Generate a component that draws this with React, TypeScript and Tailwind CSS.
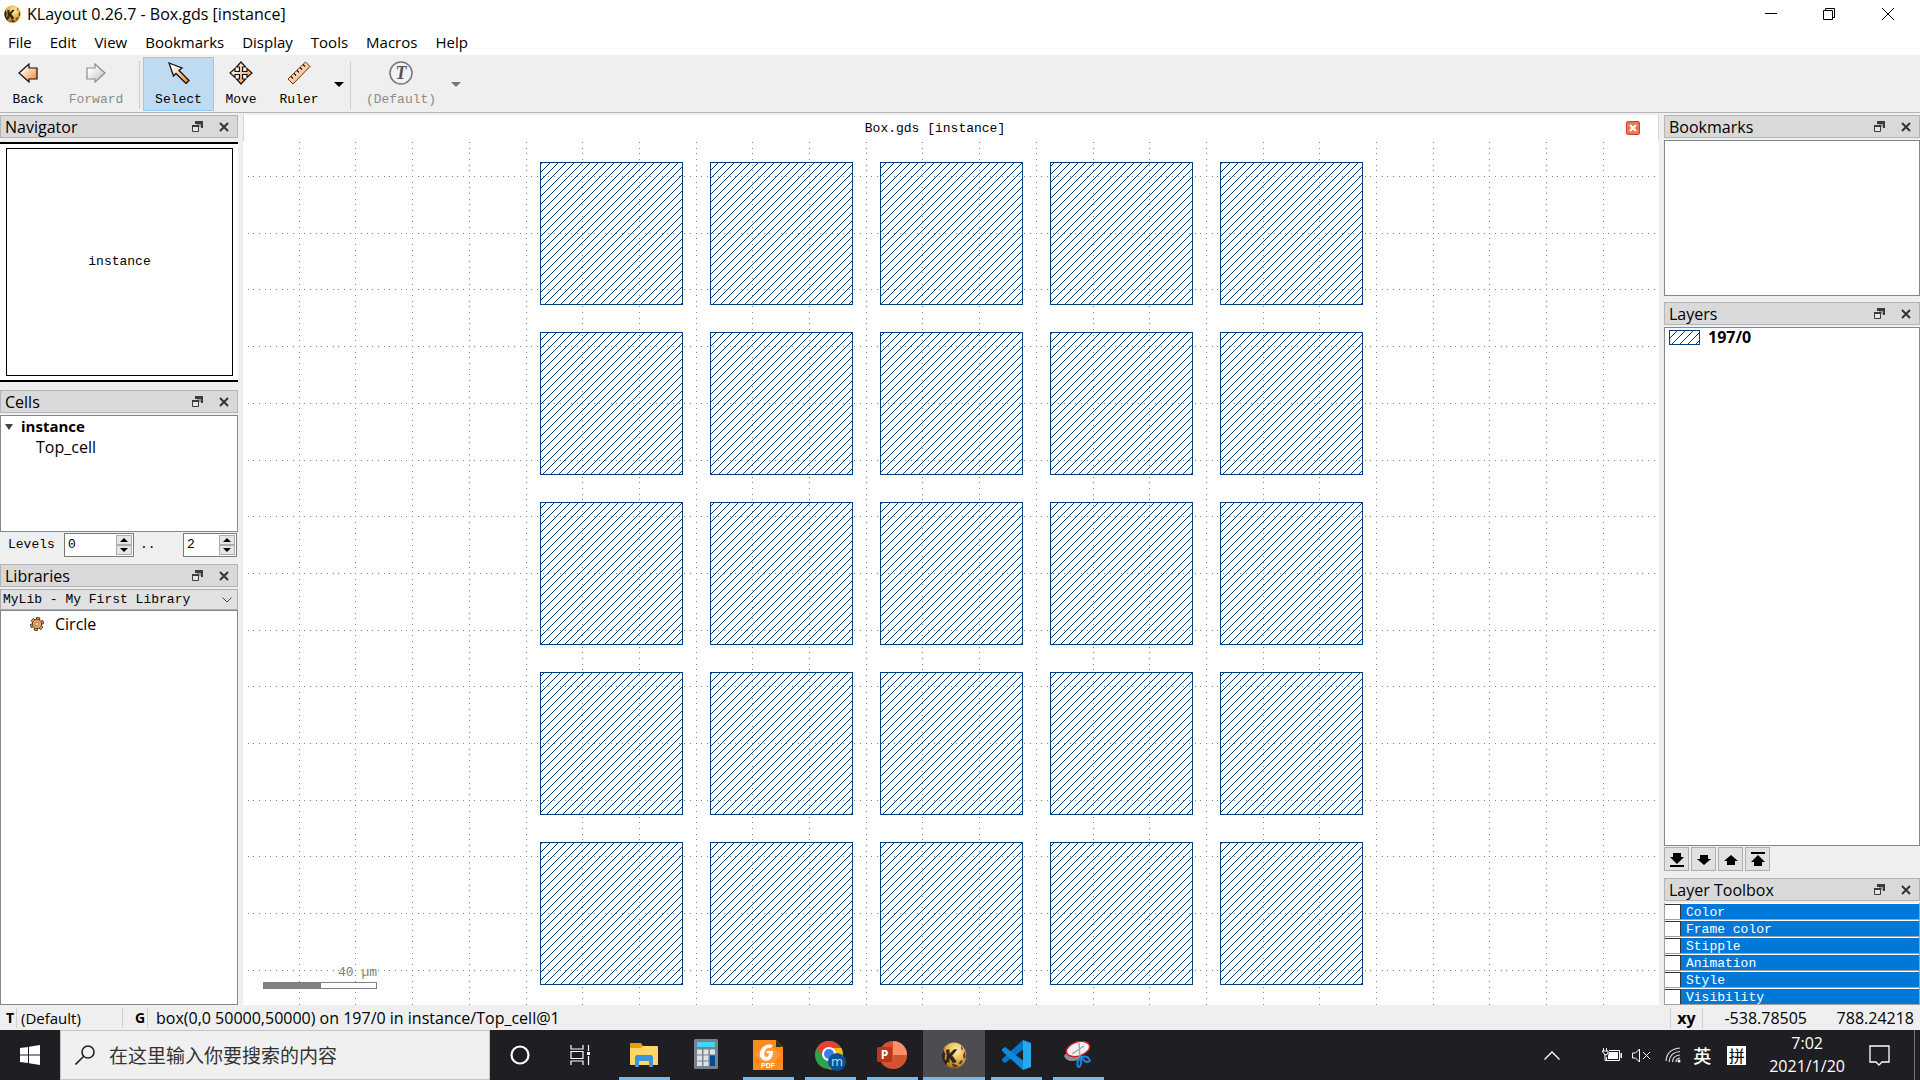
import { useId, type ReactNode } from "react";

const MENUS = ["File", "Edit", "View", "Bookmarks", "Display", "Tools", "Macros", "Help"];
const TOOLBOX = ["Color", "Frame color", "Stipple", "Animation", "Style", "Visibility"];

// Layout canvas geometry, in canvas pixels
const GRID_X = 283;
const GRID_Y = 35;
const GRID_STEP = 56.7;
const DOT_STEP = GRID_STEP / 10;
const CANVAS_W = 1412;
const CANVAS_H = 864;
const BOX_X = 297;
const BOX_Y = 21;
const BOX_SIZE = 142;
const BOX_PITCH = 170;

function buildGridPath() {
  const dots: string[] = [];
  const dot = (x: number, y: number) => dots.push(`M${Math.floor(x)} ${Math.round(y)}h1v1h-1z`);
  for (let i = -4; i <= 19; i++) {
    for (let j = -6; GRID_Y + j * DOT_STEP < CANVAS_H; j++) {
      dot(GRID_X + i * GRID_STEP, GRID_Y + j * DOT_STEP);
    }
  }
  for (let j = 0; j <= 14; j++) {
    for (let i = -49; GRID_X + i * DOT_STEP < CANVAS_W + 4; i++) {
      dot(GRID_X + i * DOT_STEP, GRID_Y + j * GRID_STEP);
    }
  }
  return dots.join("");
}

const GRID_PATH = buildGridPath();

function KLayoutLogo({ className }: { className: string }) {
  const id = useId();
  return (
    <svg viewBox="0 0 28 30" className={className} aria-hidden="true">
      <defs>
        <radialGradient id={id} cx="0.6" cy="0.3" r="0.8">
          <stop offset="0" stopColor="#fff3b0" />
          <stop offset="0.35" stopColor="#f0c565" />
          <stop offset="0.75" stopColor="#c48a35" />
          <stop offset="1" stopColor="#6b4416" />
        </radialGradient>
      </defs>
      <ellipse cx="14" cy="15" rx="13.5" ry="14.5" fill={`url(#${id})`} />
      <path d="M4 6Q0 11 0.500 17q1 6 5 9l1-4-3-3 1-6-2-3z" fill="#33251a" />
      <path d="M5 9l4-1v5l5-5h4l-6 7 5 7-4 2-4-6v5l-4-1 1-7z" fill="#33251a" />
      <path d="M22 4l2 3-1 3-1-3zM26 10l1 7-2 2-1-4zM22 20l2 1-3 4-2-1zM11 24l5 1 3 2-5 2z" fill="#5a3d1c" />
    </svg>
  );
}

function FloatIcon() {
  return (
    <svg viewBox="0 0 11 11" className="size-[11px]" aria-hidden="true">
      <path d="M3 0h8v7H9V3H3z" fill="#3c3c3c" />
      <path d="M5 3h4v3H7V4H5z" fill="#9a9a9a" />
      <path d="M0.500 4.500h6v6h-6z" fill="#e6e6e6" stroke="#3c3c3c" />
      <path d="M0 4h7v2H0z" fill="#3c3c3c" />
    </svg>
  );
}

function DockTitle({ title }: { title: string }) {
  return (
    <div className="flex h-[23px] shrink-0 items-center border border-[#b4b4b4] bg-[#d9d9d9] pr-2 pl-1">
      <h2 className="flex-1 text-base leading-5">{title}</h2>
      <button type="button" aria-label={`Float ${title}`} className="mr-4">
        <FloatIcon />
      </button>
      <button type="button" aria-label={`Close ${title}`}>
        <svg viewBox="0 0 10 10" className="size-[10px]" aria-hidden="true">
          <path d="M1 1l8 8M9 1L1 9" stroke="#333" strokeWidth="2" />
        </svg>
      </button>
    </div>
  );
}

function Spin({ label, value, className }: { label: string; value: string; className: string }) {
  return (
    <div className={`flex h-6 border border-[#7a7a7a] bg-white p-px ${className}`}>
      <input
        aria-label={label}
        defaultValue={value}
        className="w-0 flex-1 pl-0.5 font-['Liberation_Mono',monospace] text-[13px] outline-none"
      />
      <div className="flex w-4 flex-col">
        <button type="button" aria-label={`${label} up`} className="flex flex-1 items-center justify-center border border-[#adadad] bg-[#e6e6e6]">
          <svg viewBox="0 0 8 4" className="h-1 w-2"><path d="M4 0l4 4H0z" /></svg>
        </button>
        <button type="button" aria-label={`${label} down`} className="flex flex-1 items-center justify-center border border-[#adadad] bg-[#e6e6e6]">
          <svg viewBox="0 0 8 4" className="h-1 w-2"><path d="M0 0h8L4 4z" /></svg>
        </button>
      </div>
    </div>
  );
}

function ToolButton({ label, className, children }: { label: string; className: string; children: ReactNode }) {
  return (
    <button
      type="button"
      className={`flex h-[54px] flex-col items-center border pt-[3px] font-['Liberation_Mono',monospace] text-[13px] leading-4 ${className}`}
    >
      <span className="flex h-6 items-center">{children}</span>
      <span className="mt-[7px]">{label}</span>
    </button>
  );
}

function Toolbar() {
  return (
    <div className="flex h-[57px] shrink-0 items-start border-b border-[#b4b4b4] bg-[#efefef] pt-px">
      <svg className="size-0" aria-hidden="true">
        <defs>
          <linearGradient id="orange" x1="0" y1="0" x2="1" y2="1">
            <stop offset="0.2" stopColor="#fff" />
            <stop offset="1" stopColor="#ff7f1a" />
          </linearGradient>
          <linearGradient id="grey" x1="0" y1="0" x2="1" y2="1">
            <stop offset="0.2" stopColor="#fff" />
            <stop offset="1" stopColor="#bbb" />
          </linearGradient>
        </defs>
      </svg>
      <ToolButton label="Back" className="w-14 border-transparent">
        <svg viewBox="0 0 20 20" className="size-5">
          <path d="M1 10L11 1v4h8v11h-8v3z" fill="url(#orange)" stroke="#111" strokeWidth="1.200" />
        </svg>
      </ToolButton>
      <ToolButton label="Forward" className="w-20 border-transparent text-[#8c8c8c]">
        <svg viewBox="0 0 20 20" className="size-5">
          <path d="M19 10L9 1v4H1v11h8v3z" fill="url(#grey)" stroke="#8c8c8c" strokeWidth="1.200" />
        </svg>
      </ToolButton>
      <div className="mx-[3px] mt-1 h-12 w-px bg-[#cfcfcf]" />
      <ToolButton label="Select" className="w-[71px] border-[#90c8f6] bg-[#bfdbf2]">
        <svg viewBox="0 0 22 22" className="size-[22px]">
          <path d="M1 1l13 5-3 2.500 10 10-3 3-10-10L5.500 14z" fill="url(#orange)" stroke="#111" strokeWidth="1.300" />
        </svg>
      </ToolButton>
      <ToolButton label="Move" className="w-[54px] border-transparent">
        <svg viewBox="0 0 24 24" className="size-6">
          <path
            d="M12 1l4.500 5h-3v4.500H18v-3l5 4.500-5 4.500v-3h-4.500V18h3L12 23l-4.500-5h3v-4.500H6v3L1 12l5-4.500v3h4.500V6h-3z"
            fill="url(#orange)"
            stroke="#111"
            strokeWidth="1.200"
          />
        </svg>
      </ToolButton>
      <ToolButton label="Ruler" className="w-[62px] border-transparent">
        <svg viewBox="0 0 24 24" className="size-6">
          <path d="M1 18L18.500 1l4.500 4.500L6 23z" fill="url(#orange)" stroke="#6b3a10" />
          <path d="M4 15.500l2 2M7 12.500l2 2M10 9.500l2 2M13 6.500l2 2M16 3.500l2 2" stroke="#111" strokeWidth="1.200" />
        </svg>
      </ToolButton>
      <button type="button" aria-label="Ruler types" className="mt-[25px] ml-1">
        <svg viewBox="0 0 10 5" className="h-[5px] w-[10px]"><path d="M0 0h10L5 5z" /></svg>
      </button>
      <div className="mt-1 ml-1.5 h-12 w-px bg-[#cfcfcf]" />
      <ToolButton label="(Default)" className="ml-2 w-[84px] border-transparent text-[#8c8c8c]">
        <svg viewBox="0 0 24 24" className="size-6">
          <circle cx="12" cy="12" r="11" fill="#f2f2f2" stroke="#777" strokeWidth="1.500" />
          <text x="12" y="18" textAnchor="middle" className="fill-[#555] font-['Liberation_Serif',serif] text-[18px] font-bold italic">
            T
          </text>
        </svg>
      </ToolButton>
      <button type="button" aria-label="Default options" className="mt-[25px] ml-2">
        <svg viewBox="0 0 10 5" className="h-[5px] w-[10px]"><path d="M0 0h10L5 5z" fill="#777" /></svg>
      </button>
    </div>
  );
}

function LeftDocks() {
  return (
    <aside className="flex w-[238px] shrink-0 flex-col">
      <DockTitle title="Navigator" />
      <div className="mt-1 border-y-2 border-black bg-white py-1 pr-[5px] pl-1.5">
        <div className="flex h-[228px] items-center justify-center border border-black font-['Liberation_Mono',monospace] text-[13px]">
          instance
        </div>
      </div>
      <div className="mt-2 flex flex-col">
        <DockTitle title="Cells" />
      </div>
      <ul className="mt-0.5 h-[117px] border border-[#828790] bg-white text-base leading-[21px]">
        <li className="flex items-center gap-2 pl-1 text-[15px] leading-[21px] font-bold">
          <svg viewBox="0 0 8 6" className="h-1.5 w-2"><path d="M0 0h8L4 6z" fill="#444" /></svg>
          instance
        </li>
        <li className="pl-[35px]">Top_cell</li>
      </ul>
      <div className="mt-px flex h-6 items-center pr-px pl-2 font-['Liberation_Mono',monospace] text-[13px]">
        <span className="w-14">Levels</span>
        <Spin label="First level" value="0" className="w-[70px]" />
        <span className="flex-1 pl-1.5">..</span>
        <Spin label="Last level" value="2" className="w-[54px]" />
      </div>
      <div className="mt-[7px] flex flex-col">
        <DockTitle title="Libraries" />
      </div>
      <div className="relative mt-0.5">
        <select
          aria-label="Library"
          className="block h-[21px] w-full appearance-none border border-[#adadad] bg-[#e1e1e1] pl-0.5 font-['Liberation_Mono',monospace] text-[13px] leading-4"
        >
          <option>MyLib - My First Library</option>
        </select>
        <svg viewBox="0 0 10 6" className="pointer-events-none absolute top-2 right-1.5 h-1.5 w-2.5">
          <path d="M0.500 0.500L5 5l4.500-4.500" fill="none" stroke="#444" />
        </svg>
      </div>
      <ul className="flex-1 border border-[#828790] bg-white pt-[3px]">
        <li className="flex items-center gap-[11px] pl-[29px] text-base leading-5">
          <svg viewBox="-7 -7 14 14" className="size-3.5">
            <g fill="#f0a058" stroke="#4a3020" strokeWidth="0.900" transform="rotate(12)">
              {[0, 60, 120].map((angle) => (
                <rect key={angle} x="-1.600" y="-6.500" width="3.200" height="13" transform={`rotate(${angle})`} />
              ))}
              <circle r="4.500" />
            </g>
            <circle r="4" fill="#f0a058" />
            <circle r="1.800" fill="#ddd" stroke="#8a7a6a" strokeWidth="0.800" />
          </svg>
          Circle
        </li>
      </ul>
    </aside>
  );
}

function LayoutView() {
  const cells = [0, 1, 2, 3, 4];
  return (
    <main className="mx-[5px] flex min-w-0 flex-1 flex-col bg-white">
      <div className="flex h-[26px] shrink-0 items-center border-x border-[#d4d4d4] pr-[18px]">
        <h1 className="flex-1 pt-0.5 text-center font-['Liberation_Mono',monospace] text-[13px]">Box.gds [instance]</h1>
        <button type="button" aria-label="Close view">
          <svg viewBox="0 0 14 14" className="size-3.5">
            <rect x="0.500" y="0.500" width="13" height="13" rx="1.500" fill="#e57a50" stroke="#d83c2c" />
            <path d="M4 4l6 6M10 4l-6 6" stroke="#fff" strokeWidth="2.200" />
          </svg>
        </button>
      </div>
      <svg className="min-h-0 w-full flex-1" shapeRendering="crispEdges" role="img" aria-label="Cell layout">
        <defs>
          <pattern id="hatch" width="8" height="8" patternUnits="userSpaceOnUse">
            <path
              d="M0 0h1v1H0zM7 1h1v1H7zM6 2h1v1H6zM5 3h1v1H5zM4 4h1v1H4zM3 5h1v1H3zM2 6h1v1H2zM1 7h1v1H1z"
              fill="#004080"
            />
          </pattern>
        </defs>
        <path d={GRID_PATH} fill="#808080" />
        {cells.map((row) =>
          cells.map((col) => (
            <rect
              key={`${row}-${col}`}
              x={BOX_X + col * BOX_PITCH + 0.5}
              y={BOX_Y + row * BOX_PITCH + 0.5}
              width={BOX_SIZE}
              height={BOX_SIZE}
              fill="url(#hatch)"
              stroke="#004080"
            />
          ))
        )}
        {/* Scale bar */}
        <text x="134" y="835" textAnchor="end" className="fill-[#808080] font-['Liberation_Mono',monospace] text-[13px]">
          40 µm
        </text>
        <rect x="20.500" y="841.500" width="113" height="6" fill="#fff" stroke="#808080" />
        <rect x="20" y="841" width="58" height="7" fill="#808080" />
      </svg>
    </main>
  );
}

const LAYER_MOVES = [
  { label: "Move to bottom", d: "M4 2h8v4h3l-7 7-7-7h3zM1 14h14v2H1z" },
  { label: "Move down", d: "M4 4h8v4h3l-7 6-7-6h3z" },
  { label: "Move up", d: "M4 14h8v-4h3L8 4l-7 6h3z" },
  { label: "Move to top", d: "M4 15h8v-4h3L8 4l-7 7h3zM1 1h14v2H1z" },
];

function RightDocks() {
  return (
    <aside className="flex w-64 shrink-0 flex-col">
      <DockTitle title="Bookmarks" />
      <div className="mt-0.5 h-[156px] shrink-0 border border-[#828790] bg-white" />
      <div className="mt-1.5 flex flex-col">
        <DockTitle title="Layers" />
      </div>
      <div className="mt-0.5 flex-1 border border-[#828790] bg-white">
        <div className="flex items-center gap-2 pl-1 text-base leading-[18px] font-bold">
          <svg viewBox="0 0 31 15" className="h-[15px] w-[31px]" shapeRendering="crispEdges">
            <rect x="0.500" y="0.500" width="30" height="14" fill="url(#hatch)" stroke="#004080" />
          </svg>
          197/0
        </div>
      </div>
      <div className="mt-px flex gap-0.5">
        {LAYER_MOVES.map((move) => (
          <button
            key={move.label}
            type="button"
            aria-label={move.label}
            className="flex h-6 w-[25px] items-center justify-center border border-[#adadad] bg-[#e1e1e1]"
          >
            <svg viewBox="0 0 16 17" className="h-[17px] w-4"><path d={move.d} /></svg>
          </button>
        ))}
      </div>
      <div className="mt-[7px] flex flex-col">
        <DockTitle title="Layer Toolbox" />
      </div>
      <div className="mt-0.5 border-x border-[#a0a0a0]">
        {TOOLBOX.map((name) => (
          <label
            key={name}
            className="flex h-[17px] items-stretch border-t border-b border-t-white border-b-[#a0a0a0] bg-[#0078d7] font-['Liberation_Mono',monospace] text-[13px] leading-[17px] text-white"
          >
            <input type="checkbox" className="mr-[5px] w-4 appearance-none border-t border-r border-[#333] bg-white" />
            {name}
          </label>
        ))}
      </div>
    </aside>
  );
}

function StatusBar() {
  return (
    <footer className="flex h-[25px] shrink-0 items-center bg-[#efefef] text-base leading-5">
      <div className="w-[17px] border-r border-[#d0d0d0] pl-1.5 text-[14px] font-bold">T</div>
      <div className="w-[106px] border-r border-[#d0d0d0] pl-1 text-[15px]">(Default)</div>
      <div className="w-[25px] border-r border-[#d0d0d0] pl-3 text-[14px] font-bold">G</div>
      <div className="flex-1 pl-2">box(0,0 50000,50000) on 197/0 in instance/Top_cell@1</div>
      <div className="w-[33px] border-x border-[#d0d0d0] text-center font-bold">xy</div>
      <div className="w-[104px] text-right">-538.78505</div>
      <div className="w-[113px] pr-1.5 text-right">788.24218</div>
    </footer>
  );
}

interface TaskProps {
  label: string;
  running?: boolean;
  active?: boolean;
  children: ReactNode;
}

function Task({ label, running, active, children }: TaskProps) {
  return (
    <button
      type="button"
      aria-label={label}
      className={`flex h-full w-[62px] flex-col items-center ${active ? "bg-[#4d4d51]" : ""}`}
    >
      <span className="flex flex-1 items-center">{children}</span>
      <span className={`h-[3px] ${active ? "w-full" : "w-[51px]"} ${running ? "-mt-[3px] bg-[#76b9ed]" : ""}`} />
    </button>
  );
}

function Taskbar() {
  return (
    <nav className="flex h-[50px] shrink-0 items-center bg-[#1f1e23] font-['Noto_Sans_CJK_SC',sans-serif] text-white">
      <button type="button" aria-label="Start" className="flex w-[60px] justify-center">
        <svg viewBox="0 0 20 20" className="size-5" fill="#fff">
          <path d="M0 3l8-1v7.500H0zM9 1.800L20 0v9.500H9zM0 10.500h8V18l-8-1zM9 10.500h11V20L9 18.200z" />
        </svg>
      </button>
      <label className="flex h-full w-[430px] items-center border border-[#c4c4c4] bg-[#f0f0f0] pl-3.5">
        <svg viewBox="0 0 20 20" className="size-5" fill="none" stroke="#222" strokeWidth="1.600">
          <circle cx="13" cy="7" r="6" />
          <path d="M8.500 11.500L0.500 19.500" />
        </svg>
        <input
          aria-label="Search"
          placeholder="在这里输入你要搜索的内容"
          className="ml-3.5 flex-1 text-[19px] leading-7 outline-none placeholder:text-[#333]"
        />
      </label>
      <button type="button" aria-label="Cortana" className="flex w-[60px] justify-center">
        <svg viewBox="0 0 20 20" className="size-5"><circle cx="10" cy="10" r="8.500" fill="none" stroke="#fff" strokeWidth="2.200" /></svg>
      </button>
      <button type="button" aria-label="Task view" className="flex w-[60px] justify-center">
        <svg viewBox="0 0 20 20" className="size-5" fill="none" stroke="#fff" strokeWidth="1.200">
          <path d="M1 0v4h12V0M1 20v-4h12v4M1 6.500h12v7H1zM18.500 0v6M18.500 11v9" />
          <path d="M17 7h3v3h-3z" fill="#fff" stroke="none" />
        </svg>
      </button>
      <div className="ml-[3px] flex h-full">
        <Task label="File Explorer" running>
          <svg viewBox="0 0 28 24" className="h-6 w-7">
            <path d="M0 1q0-1 1-1h10l2 3v4H0z" fill="#e3a008" />
            <path d="M0 5h11l2-2h14q1 0 1 1v18H0z" fill="#ffd667" />
            <path d="M5 14q0-2 2-2h14q2 0 2 2v10h-4v-6H9v6H5z" fill="#3c94dc" />
          </svg>
        </Task>
        <Task label="Calculator">
          <svg viewBox="0 0 24 30" className="h-[30px] w-6">
            <rect width="24" height="30" rx="1.500" fill="#79838f" />
            <path d="M3 3h18v5H3z" fill="#45d3f7" />
            <path d="M3 10.500h5v5H3zM9.500 10.500h5v5h-5zM16 10.500h5v5h-5zM3 16.500h5v5H3zM9.500 16.500h5v5h-5zM3 22.500h5v4.500H3zM9.500 22.500h5v4.500h-5z" fill="#dfe3e8" />
            <path d="M16 16.500h5V27h-5z" fill="#0a4a94" />
          </svg>
        </Task>
        <Task label="PDF reader" running>
          <svg viewBox="0 0 30 30" className="size-[30px]">
            <path d="M0 0h23l7 7v23H0z" fill="#fa8b1f" />
            <path d="M23 0v7h7z" fill="#3a2a20" />
            <path d="M2 15L15 3l13 12-13 12z" fill="#fb9a3a" />
            <path d="M20 5q-7-2-11 3-4 6-1 10 3 4 8 2 4-2 4-9h-6l-1 2h3q0 4-3 4-3-1-1-6 2-4 6-3z" fill="#fff" />
            <text x="15" y="28" textAnchor="middle" className="fill-white font-['Liberation_Sans',sans-serif] text-[7px] font-bold">PDF</text>
          </svg>
        </Task>
        <Task label="Chrome" running>
          <svg viewBox="0 0 31 31" className="size-[31px]">
            <circle cx="14" cy="15" r="14" fill="#2fa24c" />
            <path d="M2 8Q6 1 14 1t12 7H14q-6 0-7 7z" fill="#e5433a" />
            <path d="M14 8h12.500Q30 17 25 24t-11 5l6-11z" fill="#fbc116" />
            <circle cx="14" cy="14" r="7" fill="#fff" />
            <circle cx="14" cy="14" r="5" fill="#3b7ded" />
            <circle cx="22" cy="22" r="9" fill="#07539a" />
            <text x="22" y="26" textAnchor="middle" className="fill-[#b9dcf8] font-['Open_Sans',sans-serif] text-[13px]">m</text>
          </svg>
        </Task>
        <Task label="PowerPoint" running>
          <svg viewBox="0 0 30 28" className="h-7 w-[30px]">
            <circle cx="16" cy="14" r="14" fill="#d35230" />
            <path d="M16 0a14 14 0 0 1 14 14H16z" fill="#ff8f6b" />
            <path d="M16 28a14 14 0 0 0 14-14H16z" fill="#d35230" />
            <rect y="6" width="15" height="15" rx="1.500" fill="#b9381a" />
            <text x="7.500" y="18" textAnchor="middle" className="fill-white font-['Open_Sans',sans-serif] text-[12px] font-bold">P</text>
          </svg>
        </Task>
        <Task label="KLayout" running active>
          <KLayoutLogo className="h-[27px] w-7" />
        </Task>
        <Task label="Visual Studio Code" running>
          <svg viewBox="0 0 30 30" className="size-[30px]">
            <path d="M22 0L1 19v2l3 2 18-13.500z" fill="#0078c8" />
            <path d="M22 30L1 11V9l3-2 18 13.500z" fill="#1189d6" />
            <path d="M22 0l8 3v24l-8 3z" fill="#27a8f2" />
          </svg>
        </Task>
        <Task label="Snipping Tool" running>
          <svg viewBox="0 0 28 28" className="size-7">
            <path d="M0 15q3-5 11-4l7 4q-3 5-10 5-6 0-8-5z" fill="#8b8f96" />
            <ellipse cx="14" cy="8" rx="12" ry="7" fill="#f2f2f2" stroke="#d0202a" strokeWidth="1.500" transform="rotate(-18 14 8)" />
            <path d="M15 2l1 16M8 13l12-8" stroke="#a8a8a8" strokeWidth="1.500" />
            <path d="M16 17q-4 4-2 9 4 0 3-9zM17 16q7-2 9 4-4 3-9-4z" fill="none" stroke="#1c86d8" strokeWidth="2" />
          </svg>
        </Task>
      </div>
      <div className="ml-auto flex h-full items-center">
        <button type="button" aria-label="Show hidden icons" className="mr-[42px]">
          <svg viewBox="0 0 16 9" className="h-[9px] w-4"><path d="M0.500 8.500L8 1l7.500 7.500" fill="none" stroke="#fff" strokeWidth="1.300" /></svg>
        </button>
        <svg viewBox="0 0 20 14" className="mr-2.5 h-3.5 w-5">
          <path d="M1.500 0v3M4.500 0v3M0 3h6v2q0 2-3 2zM3 6v6.500h3" fill="none" stroke="#fff" />
          <path d="M7 2.500h10.500v10H4.500V9" fill="none" stroke="#fff" />
          <path d="M7 4h9v7H6V8zM18.500 5H20v5h-1.500z" fill="#fff" />
        </svg>
        <svg viewBox="0 0 19 15" className="mr-3.5 h-[15px] w-[19px]" fill="none" stroke="#fff">
          <path d="M0.500 5v5h3l4 4V1l-4 4zM11 4l7 7M18 4l-7 7" />
        </svg>
        <svg viewBox="0 0 16 16" className="mr-3 size-4" fill="none" stroke="#ddd" strokeWidth="1.200">
          <path d="M1 14Q2 2 15 1M4 15Q5 5 15 4.500M7.500 15Q8 8.500 15 8M11 15q0-3.500 4-4" />
          <circle cx="14" cy="14" r="1.500" fill="#fff" stroke="none" />
        </svg>
        <span className="mr-4 text-[18px] leading-6 font-medium">英</span>
        <span className="mr-[23px] flex size-[19px] items-center justify-center bg-white text-base leading-4 text-black">拼</span>
        <div className="mr-6 text-center font-['Open_Sans',sans-serif] text-base leading-[23px]">
          <div>7:02</div>
          <div>2021/1/20</div>
        </div>
        <button type="button" aria-label="Notifications" className="mr-6">
          <svg viewBox="0 0 21 21" className="size-[21px]">
            <path d="M1 1h19v16h-7l-3 3-3-3H1z" fill="none" stroke="#fff" strokeWidth="1.300" />
          </svg>
        </button>
        <div className="mr-[5px] h-full w-px bg-[#77777a]" />
      </div>
    </nav>
  );
}

export default function App() {
  return (
    <div className="flex h-screen flex-col overflow-hidden bg-[#efefef] font-['Open_Sans',sans-serif] text-black">
      <header className="shrink-0 bg-white">
        <div className="flex h-7 items-center">
          <KLayoutLogo className="ml-[3px] h-[18px] w-[19px]" />
          <span className="ml-[5px] flex-1 text-base leading-6">KLayout 0.26.7 - Box.gds [instance]</span>
          <button type="button" aria-label="Minimize" className="mr-[46px]">
            <svg viewBox="0 0 12 12" className="size-3"><path d="M0 5.500h12" stroke="#000" /></svg>
          </button>
          <button type="button" aria-label="Restore" className="mr-[47px]">
            <svg viewBox="0 0 12 12" className="size-3" fill="none" stroke="#000">
              <path d="M0.500 2.500h9v9h-9zM2.500 2V0.500h9v9H10" />
            </svg>
          </button>
          <button type="button" aria-label="Close" className="mr-[26px]">
            <svg viewBox="0 0 12 12" className="size-3"><path d="M0 0l12 12M12 0L0 12" stroke="#000" /></svg>
          </button>
        </div>
        <div className="flex h-[28px] gap-[18px] border-b border-[#f0f0f0] pl-2 text-[15px]">
          {MENUS.map((menu) => (
            <button key={menu} type="button" className="leading-7">
              {menu}
            </button>
          ))}
        </div>
      </header>
      <Toolbar />
      <div className="flex min-h-0 flex-1 pt-0.5">
        <LeftDocks />
        <LayoutView />
        <RightDocks />
      </div>
      <StatusBar />
      <Taskbar />
    </div>
  );
}
